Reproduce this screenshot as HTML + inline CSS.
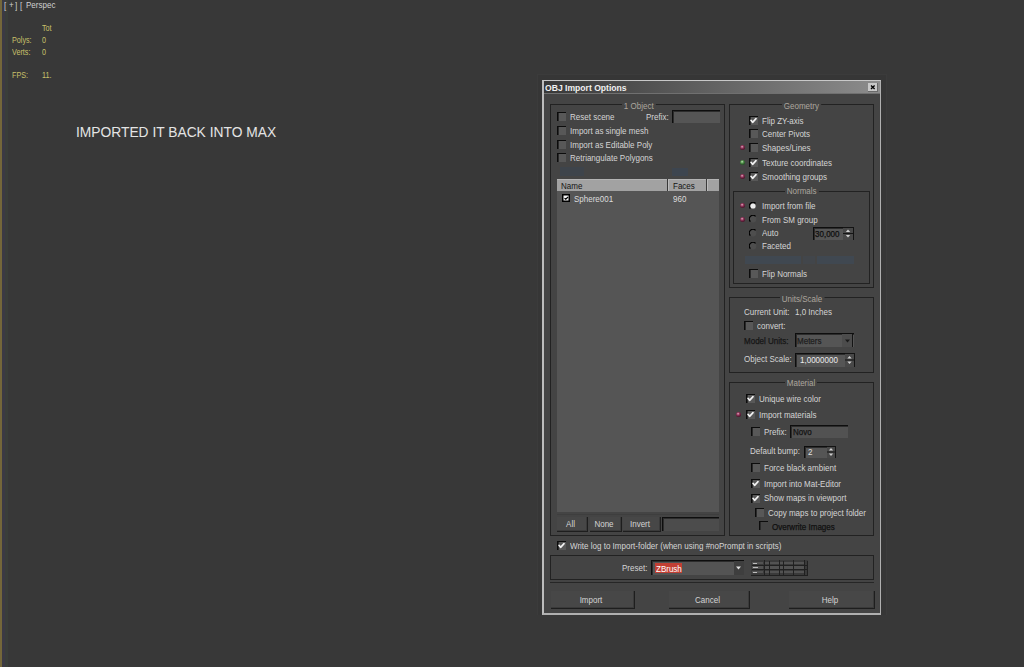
<!DOCTYPE html>
<html><head><meta charset="utf-8">
<style>
html,body{margin:0;padding:0;width:1024px;height:667px;overflow:hidden;background:#383838;position:relative;font-family:"Liberation Sans",sans-serif;}
div,svg{box-sizing:border-box;}
.a{position:absolute;}
.t{position:absolute;font-size:9px;line-height:10px;white-space:pre;color:#d4d4d4;transform:scaleX(.89);transform-origin:0 0;}
.dk{-webkit-text-stroke:0.25px currentColor;}
.y{position:absolute;font-size:9px;line-height:10px;white-space:pre;color:#c8c06a;transform:scaleX(.8);transform-origin:0 0;}
.gb{position:absolute;border:1px solid #222222;}
.gt{position:absolute;font-size:9px;line-height:10px;white-space:pre;color:#aca69e;background:#444444;padding:0 2px;transform:scaleX(.89);transform-origin:0 0;}
.cb{position:absolute;width:9px;height:9px;background:#585858;border-top:1px solid #0c0c0c;border-left:1px solid #0c0c0c;box-shadow:inset 1px 0 0 #2a2a2a;}
.cb.dis{background:#444444;}
.cb svg{position:absolute;left:-1px;top:-1px;}
.rb{position:absolute;width:8px;height:8px;border-radius:50%;background:#545454;box-shadow:inset 1px 1px 0 #000, inset 0 0 0 1px #1a1a1a;}
.rb.on{background:#efefef;box-shadow:inset 0 0 0 1px #111, inset 1px 1px 0 1px #111;}
.dot{position:absolute;width:5px;height:5px;border-radius:50%;}
.red{background:radial-gradient(circle at 42% 35%,#e8c0d0 0,#9a3c62 28%,#561832 65%,#3c1222 100%);}
.grn{background:radial-gradient(circle at 42% 35%,#d0f0c8 0,#5a9a52 28%,#2a5a2a 65%,#1c3c1c 100%);}
.btn{position:absolute;background:#474747;border-right:1px solid #1e1e1e;border-bottom:1px solid #1e1e1e;box-shadow:inset -1px -1px 0 #3a3a3a;}
.fld{position:absolute;border-top:1px solid #0e0e0e;border-left:1px solid #0e0e0e;box-shadow:inset 1px 1px 0 #2c2c2c;}
</style></head><body>

<div class="a" style="left:0px;top:0px;width:2px;height:667px;background:#74673a;"></div>
<div class="a" style="left:2px;top:0px;width:3px;height:667px;background:#3b3a44;"></div>
<div class="a" style="left:5px;top:0px;width:3px;height:667px;background:#3a3e3a;"></div>
<div class="t" style="left:4px;top:1px;color:#d0d0d0;">[</div>
<div class="t" style="left:9px;top:0px;color:#d0d0d0;">+</div>
<div class="t" style="left:15px;top:1px;color:#d0d0d0;">]</div>
<div class="t" style="left:20px;top:1px;color:#d0d0d0;">[</div>
<div class="t" style="left:26px;top:0px;color:#d0d0d0;">Perspec</div>
<div class="y" style="left:42px;top:23px;">Tot</div>
<div class="y" style="left:12px;top:35px;">Polys:</div>
<div class="y" style="left:42px;top:35px;">0</div>
<div class="y" style="left:12px;top:47px;">Verts:</div>
<div class="y" style="left:42px;top:47px;">0</div>
<div class="y" style="left:12px;top:70px;">FPS:</div>
<div class="y" style="left:42px;top:70px;">11.</div>
<div class="a" style="left:76px;top:124px;font-size:13.8px;line-height:17px;color:#e4e4e4;white-space:pre">IMPORTED IT BACK INTO MAX</div>
<div class="a" style="left:537px;top:74px;width:350px;height:541px;background:#363636;border:1px solid #3b3b3b;border-bottom:none"></div>
<div class="a" style="left:542px;top:80px;width:339px;height:535px;background:#444444;border-top:1px solid #c8c8c8;border-left:2px solid #bcbcbc;border-right:1px solid #b0b0b0;border-bottom:2px solid #b0b0b0"></div>
<div class="a" style="left:544px;top:81px;width:336px;height:12px;background:linear-gradient(to right,#383838 0%,#8c8c8c 100%);"></div>
<div class="a" style="left:544px;top:93px;width:336px;height:1px;background:#707070;"></div>
<div class="a" style="left:545px;top:82px;font-size:8.6px;font-weight:bold;line-height:12px;color:#f0f0f0;white-space:pre">OBJ Import Options</div>
<svg class="a" style="left:868px;top:83px" width="10" height="9" viewBox="0 0 10 9"><rect width="10" height="9" fill="#c8c8c8"/><path d="M0 8.5H10M9.5 0V9" stroke="#6a6a6a"/><path d="M3 2.5L6.6 6M6.6 2.5L3 6" stroke="#000" stroke-width="1.3"/></svg>
<div class="gb" style="left:550px;top:104px;width:175px;height:432px"></div>
<div class="gt" style="left:622px;top:101px">1 Object</div>
<div class="cb" style="left:557px;top:112px"></div>
<div class="t" style="left:570px;top:112px;">Reset scene</div>
<div class="t" style="left:646px;top:112px;">Prefix:</div>
<div class="fld" style="left:672px;top:110px;width:48px;height:13px;background:#555555"></div>
<div class="cb" style="left:557px;top:126px"></div>
<div class="t" style="left:570px;top:126px;">Import as single mesh</div>
<div class="cb" style="left:557px;top:140px"></div>
<div class="t" style="left:570px;top:140px;">Import as Editable Poly</div>
<div class="cb" style="left:557px;top:153px"></div>
<div class="t" style="left:570px;top:153px;">Retriangulate Polygons</div>
<div class="a" style="left:560px;top:167px;width:24px;height:9px;background:#35465a;opacity:.35"></div>
<div class="a" style="left:672px;top:168px;width:16px;height:8px;background:#35465a;opacity:.5"></div>
<div class="a" style="left:557px;top:179px;width:162px;height:333px;background:#555555;"></div>
<div class="a" style="left:557px;top:514px;width:162px;height:1px;background:#3e3e3e;"></div>
<div class="a" style="left:557px;top:179px;width:162px;height:12px;background:#a2a2a2;border-top:1px solid #b4b4b4"></div>
<div class="a" style="left:667px;top:179px;width:1px;height:12px;background:#383838;"></div>
<div class="a" style="left:668px;top:179px;width:1px;height:12px;background:#bcbcbc;"></div>
<div class="a" style="left:706px;top:179px;width:1px;height:12px;background:#3c3c3c;"></div>
<div class="a" style="left:707px;top:179px;width:1px;height:12px;background:#bcbcbc;"></div>
<div class="t" style="left:561px;top:181px;color:#141414;">Name</div>
<div class="t" style="left:673px;top:181px;color:#141414;">Faces</div>
<svg class="a" style="left:562px;top:194px" width="8" height="8" viewBox="0 0 8 8"><rect x="0" y="0" width="8" height="8" fill="#000"/><rect x="1.5" y="1.5" width="5" height="5" fill="#f4f4f4"/><path d="M2.5 4.2L3.8 5.2L6 3" fill="none" stroke="#000" stroke-width="1.2"/></svg>
<div class="t" style="left:574px;top:194px;color:#dcdcdc;">Sphere001</div>
<div class="t" style="left:673px;top:194px;color:#dcdcdc;">960</div>
<div class="btn" style="left:557px;top:517px;width:31px;height:15px"></div>
<div class="t" style="left:555px;top:519px;width:34.83px;text-align:center">All</div>
<div class="btn" style="left:590px;top:517px;width:32px;height:15px"></div>
<div class="t" style="left:588px;top:519px;width:35.96px;text-align:center">None</div>
<div class="btn" style="left:623px;top:517px;width:38px;height:15px"></div>
<div class="t" style="left:621px;top:519px;width:42.70px;text-align:center">Invert</div>
<div class="fld" style="left:662px;top:517px;width:57px;height:14px;background:#4c4c4c"></div>
<div class="gb" style="left:729px;top:104px;width:145px;height:184px"></div>
<div class="gt" style="left:782px;top:101px">Geometry</div>
<div class="cb" style="left:749px;top:116px"><svg class="ck" width="9" height="9" viewBox="0 0 9 9"><path d="M2 4.3 L3.6 6.3 L7 2.6" fill="none" stroke="#f2f2f2" stroke-width="1.7" stroke-linecap="round" stroke-linejoin="round"/></svg></div>
<div class="t" style="left:762px;top:116px;">Flip ZY-axis</div>
<div class="cb" style="left:749px;top:129px"></div>
<div class="t" style="left:762px;top:129px;">Center Pivots</div>
<div class="dot red" style="left:740px;top:145px"></div>
<div class="cb" style="left:749px;top:143px"></div>
<div class="t" style="left:762px;top:143px;">Shapes/Lines</div>
<div class="dot grn" style="left:740px;top:160px"></div>
<div class="cb" style="left:749px;top:158px"><svg class="ck" width="9" height="9" viewBox="0 0 9 9"><path d="M2 4.3 L3.6 6.3 L7 2.6" fill="none" stroke="#f2f2f2" stroke-width="1.7" stroke-linecap="round" stroke-linejoin="round"/></svg></div>
<div class="t" style="left:762px;top:158px;">Texture coordinates</div>
<div class="dot red" style="left:740px;top:174px"></div>
<div class="cb" style="left:749px;top:172px"><svg class="ck" width="9" height="9" viewBox="0 0 9 9"><path d="M2 4.3 L3.6 6.3 L7 2.6" fill="none" stroke="#f2f2f2" stroke-width="1.7" stroke-linecap="round" stroke-linejoin="round"/></svg></div>
<div class="t" style="left:762px;top:172px;">Smoothing groups</div>
<div class="gb" style="left:733px;top:191px;width:137px;height:93px"></div>
<div class="gt" style="left:785px;top:186px">Normals</div>
<div class="dot red" style="left:740px;top:203px"></div>
<svg class="a" style="left:749px;top:202px" width="8" height="8" viewBox="0 0 8 8"><circle cx="4" cy="4" r="3.4" fill="#4e4e4e"/><circle cx="4" cy="4" r="2.6" fill="#ececec"/><path d="M1.4 6.6 A3.5 3.5 0 0 1 6.6 1.4" fill="none" stroke="#000" stroke-width="1.3"/></svg>
<div class="t" style="left:762px;top:201px;">Import from file</div>
<div class="dot red" style="left:740px;top:217px"></div>
<svg class="a" style="left:749px;top:215px" width="8" height="8" viewBox="0 0 8 8"><circle cx="4" cy="4" r="3.4" fill="#4e4e4e"/><circle cx="4" cy="4" r="3.0" fill="#4e4e4e"/><path d="M1.4 6.6 A3.5 3.5 0 0 1 6.6 1.4" fill="none" stroke="#000" stroke-width="1.3"/></svg>
<div class="t" style="left:762px;top:215px;">From SM group</div>
<svg class="a" style="left:749px;top:229px" width="8" height="8" viewBox="0 0 8 8"><circle cx="4" cy="4" r="3.4" fill="#4e4e4e"/><circle cx="4" cy="4" r="3.0" fill="#4e4e4e"/><path d="M1.4 6.6 A3.5 3.5 0 0 1 6.6 1.4" fill="none" stroke="#000" stroke-width="1.3"/></svg>
<div class="t" style="left:762px;top:228px;">Auto</div>
<div class="fld" style="left:813px;top:227px;width:31px;height:13px;background:#565656"></div>
<div class="t dk" style="left:815px;top:229px;color:#0e0e0e;">30,000</div>
<svg class="a" style="left:843px;top:227px" width="11" height="13" viewBox="0 0 11 13"><rect x="0" y="0" width="11" height="13" fill="#484848"/><path d="M0 0.5H11 M10.5 0V13 M0 6.5H10" stroke="#141414" stroke-width="1"/><path d="M2.8 4.9 L5.0 2.5 L7.2 4.9Z" fill="#d0d0d0"/><path d="M2.8 8.1 L5.0 10.5 L7.2 8.1Z" fill="#d0d0d0"/></svg>
<svg class="a" style="left:749px;top:242px" width="8" height="8" viewBox="0 0 8 8"><circle cx="4" cy="4" r="3.4" fill="#4e4e4e"/><circle cx="4" cy="4" r="3.0" fill="#4e4e4e"/><path d="M1.4 6.6 A3.5 3.5 0 0 1 6.6 1.4" fill="none" stroke="#000" stroke-width="1.3"/></svg>
<div class="t" style="left:762px;top:241px;">Faceted</div>
<div class="a" style="left:745px;top:256px;width:56px;height:8px;background:#3e4b5a;opacity:.6"></div>
<div class="a" style="left:803px;top:256px;width:12px;height:8px;background:#3e4b5a;opacity:.35"></div>
<div class="a" style="left:817px;top:256px;width:37px;height:8px;background:#3e4b5a;opacity:.6"></div>
<div class="cb" style="left:749px;top:269px"></div>
<div class="t" style="left:762px;top:269px;">Flip Normals</div>
<div class="gb" style="left:729px;top:297px;width:145px;height:76px"></div>
<div class="gt" style="left:780px;top:294px">Units/Scale</div>
<div class="t" style="left:744px;top:307px;">Current Unit:</div>
<div class="t" style="left:795px;top:307px;">1,0 Inches</div>
<div class="cb" style="left:744px;top:321px"></div>
<div class="t" style="left:757px;top:321px;">convert:</div>
<div class="t dk" style="left:744px;top:336px;color:#161616;">Model Units:</div>
<div class="fld" style="left:795px;top:333px;width:59px;height:14px;background:#555555"></div>
<div class="t dk" style="left:797px;top:336px;color:#1e1e1e;">Meters</div>
<div class="a" style="left:842px;top:334px;width:11px;height:13px;background:#4c4c4c;border-right:1px solid #141414"></div>
<svg class="a" style="left:845px;top:339px" width="5" height="4" viewBox="0 0 5 4"><path d="M0 0.5H5L2.5 3.5Z" fill="#1a1a1a"/></svg>
<div class="t" style="left:744px;top:354px;">Object Scale:</div>
<div class="fld" style="left:795px;top:353px;width:50px;height:14px;background:#555555"></div>
<div class="t" style="left:800px;top:355px;color:#ececec;">1,0000000</div>
<svg class="a" style="left:845px;top:353px" width="10" height="14" viewBox="0 0 10 14"><rect x="0" y="0" width="10" height="14" fill="#484848"/><path d="M0 0.5H10 M9.5 0V14 M0 7.0H9" stroke="#141414" stroke-width="1"/><path d="M2.3 5.4 L4.5 3.0 L6.7 5.4Z" fill="#d0d0d0"/><path d="M2.3 8.6 L4.5 11.0 L6.7 8.6Z" fill="#d0d0d0"/></svg>
<div class="gb" style="left:729px;top:382px;width:145px;height:154px"></div>
<div class="gt" style="left:785px;top:378px">Material</div>
<div class="cb" style="left:746px;top:394px"><svg class="ck" width="9" height="9" viewBox="0 0 9 9"><path d="M2 4.3 L3.6 6.3 L7 2.6" fill="none" stroke="#f2f2f2" stroke-width="1.7" stroke-linecap="round" stroke-linejoin="round"/></svg></div>
<div class="t" style="left:759px;top:394px;">Unique wire color</div>
<div class="dot red" style="left:736px;top:412px"></div>
<div class="cb" style="left:746px;top:410px"><svg class="ck" width="9" height="9" viewBox="0 0 9 9"><path d="M2 4.3 L3.6 6.3 L7 2.6" fill="none" stroke="#f2f2f2" stroke-width="1.7" stroke-linecap="round" stroke-linejoin="round"/></svg></div>
<div class="t" style="left:759px;top:410px;">Import materials</div>
<div class="cb" style="left:751px;top:427px"></div>
<div class="t" style="left:764px;top:427px;">Prefix:</div>
<div class="fld" style="left:790px;top:425px;width:58px;height:13px;background:#525252"></div>
<div class="t dk" style="left:793px;top:427px;color:#141414;">Novo</div>
<div class="t" style="left:750px;top:446px;">Default bump:</div>
<div class="fld" style="left:804px;top:446px;width:23px;height:12px;background:#555555"></div>
<div class="t" style="left:808px;top:447px;color:#e0e0e0;">2</div>
<svg class="a" style="left:827px;top:446px" width="9" height="12" viewBox="0 0 9 12"><rect x="0" y="0" width="9" height="12" fill="#484848"/><path d="M0 0.5H9 M8.5 0V12 M0 6.0H8" stroke="#141414" stroke-width="1"/><path d="M1.7999999999999998 4.4 L4.0 2.0 L6.2 4.4Z" fill="#d0d0d0"/><path d="M1.7999999999999998 7.6 L4.0 10.0 L6.2 7.6Z" fill="#d0d0d0"/></svg>
<div class="cb" style="left:751px;top:463px"></div>
<div class="t" style="left:764px;top:463px;">Force black ambient</div>
<div class="cb" style="left:751px;top:479px"><svg class="ck" width="9" height="9" viewBox="0 0 9 9"><path d="M2 4.3 L3.6 6.3 L7 2.6" fill="none" stroke="#f2f2f2" stroke-width="1.7" stroke-linecap="round" stroke-linejoin="round"/></svg></div>
<div class="t" style="left:764px;top:479px;">Import into Mat-Editor</div>
<div class="cb" style="left:751px;top:494px"><svg class="ck" width="9" height="9" viewBox="0 0 9 9"><path d="M2 4.3 L3.6 6.3 L7 2.6" fill="none" stroke="#f2f2f2" stroke-width="1.7" stroke-linecap="round" stroke-linejoin="round"/></svg></div>
<div class="t" style="left:764px;top:493px;">Show maps in viewport</div>
<div class="cb" style="left:755px;top:508px"></div>
<div class="t" style="left:768px;top:508px;">Copy maps to project folder</div>
<div class="cb dis" style="left:759px;top:521px"></div>
<div class="t dk" style="left:772px;top:522px;color:#101010;">Overwrite Images</div>
<div class="cb" style="left:557px;top:541px"><svg class="ck" width="9" height="9" viewBox="0 0 9 9"><path d="M2 4.3 L3.6 6.3 L7 2.6" fill="none" stroke="#f2f2f2" stroke-width="1.7" stroke-linecap="round" stroke-linejoin="round"/></svg></div>
<div class="t" style="left:570px;top:541px;">Write log to Import-folder (when using #noPrompt in scripts)</div>
<div class="gb" style="left:550px;top:555px;width:324px;height:25px"></div>
<div class="t" style="left:622px;top:563px;">Preset:</div>
<div class="fld" style="left:651px;top:560px;width:93px;height:15px;background:#545454"></div>
<div class="a" style="left:655px;top:563px;width:27px;height:10px;background:#c23f34;"></div>
<div class="t" style="left:656px;top:564px;color:#ffffff;">ZBrush</div>
<div class="a" style="left:734px;top:561px;width:10px;height:14px;background:#3e3e3e;"></div>
<svg class="a" style="left:736px;top:566px" width="5" height="4" viewBox="0 0 5 4"><path d="M0 0.5H5L2.5 3.5Z" fill="#e0e0e0"/></svg>
<svg class="a" style="left:751px;top:560px" width="57" height="16" viewBox="0 0 57 16"><rect width="57" height="16" fill="#3a3a3a"/><g fill="#525252"><rect x="1" y="2" width="11" height="2"/><rect x="1" y="6" width="11" height="3"/><rect x="1" y="11" width="11" height="2"/><rect x="14" y="2" width="14" height="2"/><rect x="14" y="6" width="14" height="3"/><rect x="14" y="11" width="14" height="2"/><rect x="29" y="2" width="13" height="2"/><rect x="29" y="6" width="13" height="3"/><rect x="29" y="11" width="13" height="2"/><rect x="43" y="2" width="10" height="2"/><rect x="43" y="6" width="10" height="3"/><rect x="43" y="11" width="10" height="2"/></g><g fill="#bdbdbd"><rect x="2" y="3" width="4" height="1"/><rect x="2" y="7" width="5" height="1"/><rect x="2" y="12" width="4" height="1"/></g><g fill="#202020"><rect x="0" y="15" width="57" height="1"/><rect x="1" y="5" width="55" height="1"/><rect x="1" y="9" width="55" height="1"/><rect x="13" y="0" width="1" height="16"/><rect x="18" y="1" width="1" height="14"/><rect x="28" y="0" width="1" height="16"/><rect x="32" y="1" width="1" height="14"/><rect x="42" y="0" width="1" height="16"/><rect x="53" y="0" width="1" height="16"/><rect x="56" y="1" width="1" height="15"/></g></svg>
<div class="a" style="left:550px;top:582px;width:324px;height:1px;background:#262626;"></div>
<div class="btn" style="left:551px;top:591px;width:84px;height:18px"></div>
<div class="t" style="left:549px;top:595px;width:94.38px;text-align:center">Import</div>
<div class="btn" style="left:669px;top:591px;width:81px;height:18px"></div>
<div class="t" style="left:667px;top:595px;width:91.01px;text-align:center">Cancel</div>
<div class="btn" style="left:789px;top:591px;width:86px;height:18px"></div>
<div class="t" style="left:787px;top:595px;width:96.63px;text-align:center">Help</div>
</body></html>
